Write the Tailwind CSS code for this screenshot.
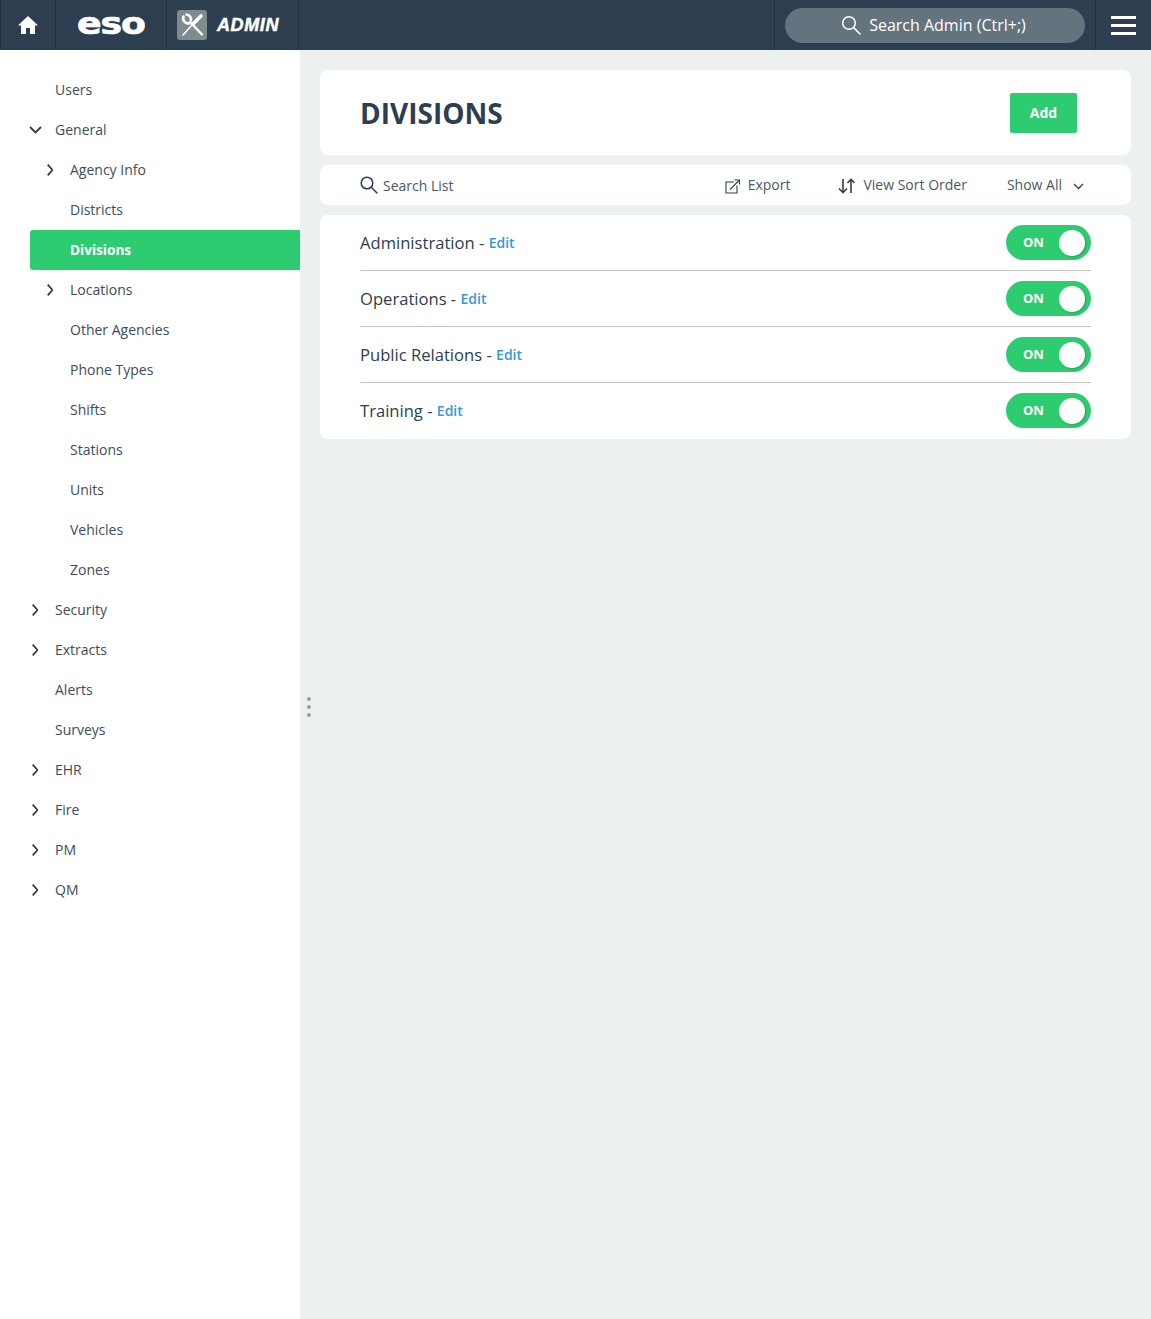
<!DOCTYPE html>
<html lang="en">
<head>
  <meta charset="UTF-8">
  <title>Divisions</title>
  <script src="https://cdn.jsdelivr.net/npm/@tailwindcss/browser@4"></script>
</head>
<body class="font-['Open_Sans',sans-serif] text-[#2c3e50] bg-[#ecf0f1]">
  <div class="w-[1151px] h-[1319px] flex flex-col overflow-hidden relative">

    <!-- Top bar -->
    <header class="h-[50px] bg-[#2c3e50] flex items-stretch text-white shrink-0">
      <div class="w-[56px] border-x border-[#22303f] flex items-center justify-center">
        <svg width="22" height="20" viewBox="0 0 22 20" fill="#fff"><path d="M11 1 L1 10.5 L4 10.5 L4 19 L9 19 L9 13 L13 13 L13 19 L18 19 L18 10.5 L21 10.5 Z"/></svg>
      </div>
      <div class="w-[111px] border-r border-[#22303f] flex items-center justify-center">
        <span class="font-['DejaVu_Sans',sans-serif] font-bold text-[31px] leading-none scale-x-[1.17] tracking-[-1px] -mt-[4px] -ml-[1px] [-webkit-text-stroke:0.7px_white]">eso</span>
      </div>
      <div class="w-[132px] border-r border-[#22303f] flex items-center pl-[10px] gap-[10px]">
        <div class="w-[30px] h-[30px] rounded-[3px] bg-[#7f8c8d]">
          <svg width="30" height="30" viewBox="0 0 30 30" fill="none" stroke="#fff" stroke-linecap="round">
            <path d="M13 12 L25 24.5" stroke-width="2.4"/>
            <path d="M6.5 6.5 A5 5 0 0 0 13 13" stroke-width="2.6"/>
            <path d="M9.5 4.5 A5 5 0 0 1 14 10" stroke-width="2.6"/>
            <path d="M24 6 L16 14" stroke-width="3.6"/>
            <path d="M15 15 L6 25" stroke-width="1.6"/>
          </svg>
        </div>
        <span class="font-['Liberation_Sans',sans-serif] font-bold italic text-[18px] tracking-[0.6px] mt-[1px] [-webkit-text-stroke:0.5px_white]">ADMIN</span>
      </div>
      <div class="flex-1"></div>
      <div class="w-[322px] border-x border-[#22303f] flex items-center pl-[10px]">
        <div class="w-[300px] h-[35px] rounded-full bg-[#65737f] flex items-center justify-center gap-[8px]">
          <svg class="-ml-[3px]" width="20" height="20" viewBox="0 0 20 20" fill="none" stroke="#fff" stroke-width="1.5"><circle cx="8" cy="8" r="6.3"/><path d="M12.6 12.6 L19 19" stroke-linecap="round"/></svg>
          <span class="text-[16px]">Search Admin (Ctrl+;)</span>
        </div>
      </div>
      <div class="w-[55px] flex flex-col items-center justify-center gap-[5px]">
        <div class="w-[25px] h-[3px] bg-white"></div>
        <div class="w-[25px] h-[3px] bg-white"></div>
        <div class="w-[25px] h-[3px] bg-white"></div>
      </div>
    </header>

    <div class="flex flex-1">
      <!-- Sidebar -->
      <nav class="w-[300px] bg-white pt-[20px] text-[14px] text-[#3d4c5b] shrink-0">
        <div class="h-10 flex items-center pb-[2px] pl-[55px]">Users</div>
        <div class="h-10 flex items-center pb-[2px] pl-[29px] gap-[13px]">
          <svg class="mt-[2px]" width="13" height="8" viewBox="0 0 13 8" fill="none" stroke="#2c3e50" stroke-width="1.8"><path d="M1 1 L6.5 6.5 L12 1"/></svg>General
        </div>
        <div class="h-10 flex items-center pb-[2px] pl-[47px] gap-[17px]">
          <svg class="mt-[2px]" width="6" height="12" viewBox="0 0 6 12" fill="none" stroke="#2c3e50" stroke-width="1.8"><path d="M0.7 0.7 L5.5 6 L0.7 11.3"/></svg>Agency Info
        </div>
        <div class="h-10 flex items-center pb-[2px] pl-[70px]">Districts</div>
        <div class="h-10 flex items-center pl-[40px] ml-[30px] bg-[#2ecc71] rounded-l-[3px] text-white text-[13.6px] font-bold">Divisions</div>
        <div class="h-10 flex items-center pb-[2px] pl-[47px] gap-[17px]">
          <svg class="mt-[2px]" width="6" height="12" viewBox="0 0 6 12" fill="none" stroke="#2c3e50" stroke-width="1.8"><path d="M0.7 0.7 L5.5 6 L0.7 11.3"/></svg>Locations
        </div>
        <div class="h-10 flex items-center pb-[2px] pl-[70px]">Other Agencies</div>
        <div class="h-10 flex items-center pb-[2px] pl-[70px]">Phone Types</div>
        <div class="h-10 flex items-center pb-[2px] pl-[70px]">Shifts</div>
        <div class="h-10 flex items-center pb-[2px] pl-[70px]">Stations</div>
        <div class="h-10 flex items-center pb-[2px] pl-[70px]">Units</div>
        <div class="h-10 flex items-center pb-[2px] pl-[70px]">Vehicles</div>
        <div class="h-10 flex items-center pb-[2px] pl-[70px]">Zones</div>
        <div class="h-10 flex items-center pb-[2px] pl-[32px] gap-[17px]">
          <svg class="mt-[2px]" width="6" height="12" viewBox="0 0 6 12" fill="none" stroke="#2c3e50" stroke-width="1.8"><path d="M0.7 0.7 L5.5 6 L0.7 11.3"/></svg>Security
        </div>
        <div class="h-10 flex items-center pb-[2px] pl-[32px] gap-[17px]">
          <svg class="mt-[2px]" width="6" height="12" viewBox="0 0 6 12" fill="none" stroke="#2c3e50" stroke-width="1.8"><path d="M0.7 0.7 L5.5 6 L0.7 11.3"/></svg>Extracts
        </div>
        <div class="h-10 flex items-center pb-[2px] pl-[55px]">Alerts</div>
        <div class="h-10 flex items-center pb-[2px] pl-[55px]">Surveys</div>
        <div class="h-10 flex items-center pb-[2px] pl-[32px] gap-[17px]">
          <svg class="mt-[2px]" width="6" height="12" viewBox="0 0 6 12" fill="none" stroke="#2c3e50" stroke-width="1.8"><path d="M0.7 0.7 L5.5 6 L0.7 11.3"/></svg>EHR
        </div>
        <div class="h-10 flex items-center pb-[2px] pl-[32px] gap-[17px]">
          <svg class="mt-[2px]" width="6" height="12" viewBox="0 0 6 12" fill="none" stroke="#2c3e50" stroke-width="1.8"><path d="M0.7 0.7 L5.5 6 L0.7 11.3"/></svg>Fire
        </div>
        <div class="h-10 flex items-center pb-[2px] pl-[32px] gap-[17px]">
          <svg class="mt-[2px]" width="6" height="12" viewBox="0 0 6 12" fill="none" stroke="#2c3e50" stroke-width="1.8"><path d="M0.7 0.7 L5.5 6 L0.7 11.3"/></svg>PM
        </div>
        <div class="h-10 flex items-center pb-[2px] pl-[32px] gap-[17px]">
          <svg class="mt-[2px]" width="6" height="12" viewBox="0 0 6 12" fill="none" stroke="#2c3e50" stroke-width="1.8"><path d="M0.7 0.7 L5.5 6 L0.7 11.3"/></svg>QM
        </div>
      </nav>

      <!-- Resize handle -->
      <div class="absolute left-[307px] top-[697px] flex flex-col gap-[4px]">
        <div class="w-[4px] h-[4px] rounded-full bg-[#95a5a6]"></div>
        <div class="w-[4px] h-[4px] rounded-full bg-[#95a5a6]"></div>
        <div class="w-[4px] h-[4px] rounded-full bg-[#95a5a6]"></div>
      </div>

      <!-- Main -->
      <main class="flex-1 p-[20px] flex flex-col gap-[10px]">
        <div class="h-[85px] bg-white rounded-[8px] flex items-center justify-between pl-[40px] pr-[54px]">
          <h1 class="text-[28px] font-bold leading-none mt-[1px]">DIVISIONS</h1>
          <button class="w-[67px] h-[40px] bg-[#2ecc71] rounded-[2px] text-white text-[14px] font-bold">Add</button>
        </div>

        <div class="h-[40px] bg-white rounded-[8px] flex items-center text-[14px] text-[#4a5866] pl-[40px]">
          <svg width="18" height="18" viewBox="0 0 18 18" fill="none" stroke="#2c3e50" stroke-width="1.5"><circle cx="7" cy="7" r="5.8"/><path d="M11.2 11.2 L17 17" stroke-linecap="round"/></svg>
          <span class="ml-[5px]">Search List</span>
          <div class="ml-auto flex items-center">
            <svg class="mt-[2px]" width="15" height="15" viewBox="0 0 15 15" fill="none" stroke="#2c3e50" stroke-width="1.1"><path d="M9 3 H1 V14 H12 V6.5"/><path d="M5 10.5 L14 1.5"/><path d="M9.5 1 H14.5 V5.5"/></svg>
            <span class="ml-[8px] -mt-[1px]">Export</span>
            <svg class="ml-[48px] mt-[1px]" width="18" height="16" viewBox="0 0 18 16" fill="none" stroke="#2c3e50" stroke-width="1.6"><path d="M5 1 V14.5"/><path d="M1 10.5 L5 14.5 L9 10.5"/><path d="M13 15 V1.5"/><path d="M9.5 5 L13 1.5 L16.5 5"/></svg>
            <span class="ml-[7px] -mt-[1px]">View Sort Order</span>
            <span class="ml-[40px] -mt-[1px]">Show All</span>
            <svg class="ml-[11px] mt-[2px]" width="11" height="7" viewBox="0 0 11 7" fill="none" stroke="#2c3e50" stroke-width="1.3"><path d="M1 1 L5.5 5.5 L10 1"/></svg>
            <div class="w-[47px]"></div>
          </div>
        </div>

        <div class="bg-white rounded-[8px] pl-[40px] pr-[40px] pt-[10px] pb-[11px] flex flex-col">
          <div class="h-[46px] pb-[10px] border-b border-[#bdc3c7] flex items-center justify-between">
            <div class="text-[16.6px] pt-[1px]">Administration - <a class="relative -top-[1px] text-[14px] font-semibold text-[#3498db]">Edit</a></div>
            <div class="w-[85px] h-[35px] rounded-full bg-[#2ecc71] flex items-center justify-between pl-[17px] pr-[6px]">
              <span class="text-white text-[13px] font-bold">ON</span>
              <span class="w-[26px] h-[26px] rounded-full bg-white shadow-[1px_1px_2px_rgba(0,0,0,0.2)]"></span>
            </div>
          </div>
          <div class="h-[56px] py-[10px] border-b border-[#bdc3c7] flex items-center justify-between">
            <div class="text-[16.6px] pt-[1px]">Operations - <a class="relative -top-[1px] text-[14px] font-semibold text-[#3498db]">Edit</a></div>
            <div class="w-[85px] h-[35px] rounded-full bg-[#2ecc71] flex items-center justify-between pl-[17px] pr-[6px]">
              <span class="text-white text-[13px] font-bold">ON</span>
              <span class="w-[26px] h-[26px] rounded-full bg-white shadow-[1px_1px_2px_rgba(0,0,0,0.2)]"></span>
            </div>
          </div>
          <div class="h-[56px] py-[10px] border-b border-[#bdc3c7] flex items-center justify-between">
            <div class="text-[16.6px] pt-[1px]">Public Relations - <a class="relative -top-[1px] text-[14px] font-semibold text-[#3498db]">Edit</a></div>
            <div class="w-[85px] h-[35px] rounded-full bg-[#2ecc71] flex items-center justify-between pl-[17px] pr-[6px]">
              <span class="text-white text-[13px] font-bold">ON</span>
              <span class="w-[26px] h-[26px] rounded-full bg-white shadow-[1px_1px_2px_rgba(0,0,0,0.2)]"></span>
            </div>
          </div>
          <div class="h-[45px] pt-[10px] flex items-center justify-between">
            <div class="text-[16.6px] pt-[1px]">Training - <a class="relative -top-[1px] text-[14px] font-semibold text-[#3498db]">Edit</a></div>
            <div class="w-[85px] h-[35px] rounded-full bg-[#2ecc71] flex items-center justify-between pl-[17px] pr-[6px]">
              <span class="text-white text-[13px] font-bold">ON</span>
              <span class="w-[26px] h-[26px] rounded-full bg-white shadow-[1px_1px_2px_rgba(0,0,0,0.2)]"></span>
            </div>
          </div>
        </div>
      </main>
    </div>
  </div>
</body>
</html>
